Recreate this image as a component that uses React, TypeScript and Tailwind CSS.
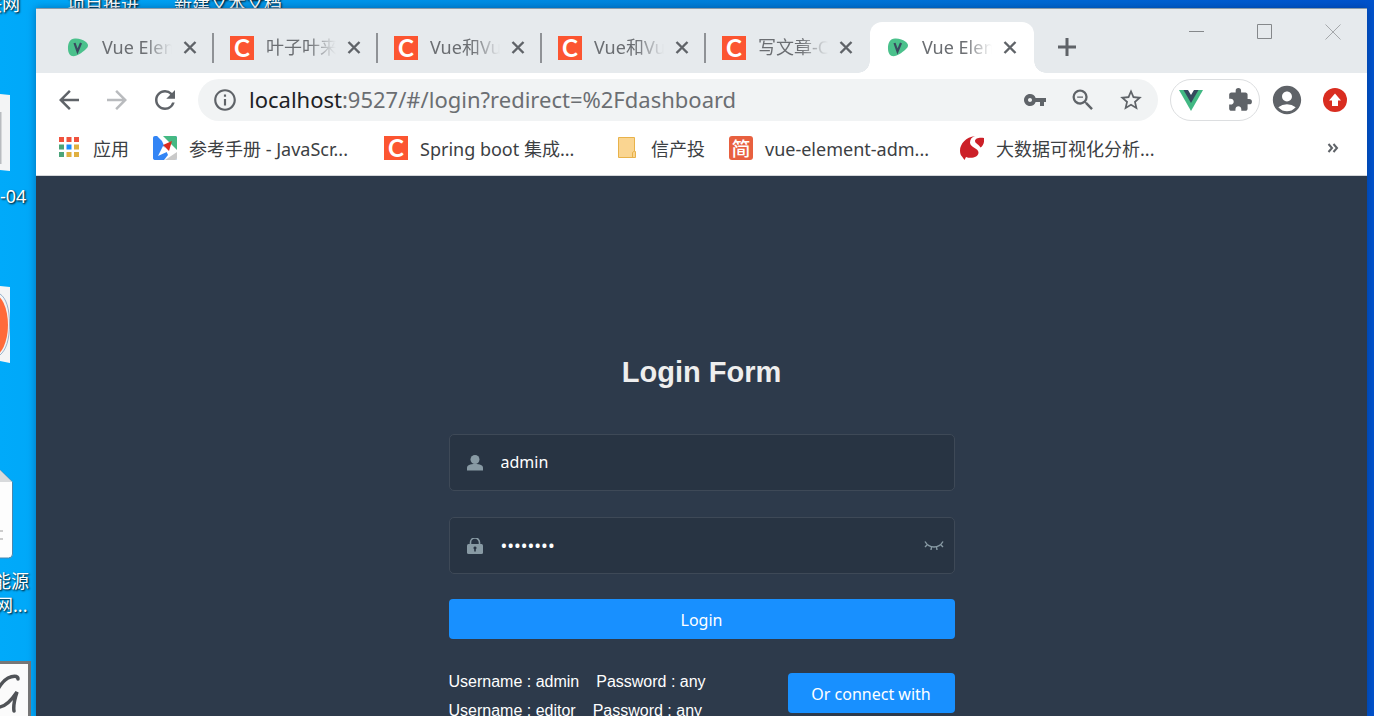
import { useState } from 'react';
import type { ReactNode } from 'react';
import {
  MdAccountCircle,
  MdArrowBack,
  MdArrowForward,
  MdExtension,
  MdInfoOutline,
  MdRefresh,
  MdStarBorder,
  MdVpnKey,
  MdZoomOut,
} from 'react-icons/md';

function VueAdminIcon() {
  return (
    <svg viewBox="0 0 24 24" className="size-6 shrink-0" aria-hidden="true">
      <path
        d="M2 13C1.800 7 4 2.500 9 2.500c4-.2 8 1 11 3.500c3 2.500 2.600 5-.5 7.500-3.500 3-8 6.500-12 6.700-3.500 0-5.300-3-5.500-7.200z"
        fill="#4bc18c"
      />
      <path d="M8.500 7l3 8.500L15 7" fill="none" stroke="#3a4a60" strokeWidth="2.200" />
    </svg>
  );
}

function CsdnIcon() {
  return (
    <span
      aria-hidden="true"
      className="flex size-6 shrink-0 items-center justify-center bg-[#fc5531] font-['Lato',sans-serif] text-[24px] leading-6 font-bold text-white"
    >
      C
    </span>
  );
}

function AppsIcon() {
  const colors = ['#f0523d', '#f0523d', '#f0523d', '#4ba47a', '#1a8cff', '#e0b040', '#4ba47a', '#e0b040', '#e0b040'];
  return (
    <svg viewBox="0 0 24 24" className="size-6 shrink-0" aria-hidden="true">
      {colors.map((c, i) => (
        <rect key={i} x={2 + (i % 3) * 7.5} y={1 + Math.floor(i / 3) * 7.5} width="5" height="5" fill={c} />
      ))}
    </svg>
  );
}

function CompassIcon() {
  return (
    <svg viewBox="0 0 24 24" className="size-6 shrink-0" aria-hidden="true">
      <rect width="24" height="24" rx="2" fill="#3385f5" />
      <path d="M8 0h14a2 2 0 0 1 2 2v15z" fill="#45b983" />
      <path d="M4 0h6l14 14v8a2 2 0 0 1-2 2H11z" fill="#fff" />
      <path d="M12 24l12-8v6a2 2 0 0 1-2 2z" fill="#c9c9c9" />
      <path d="M4 0L0 2v20l2 2h9l4-5L9 5z" fill="#3385f5" />
      <path d="M5 20L10 10l6 5z" fill="#fff" />
      <path d="M19 5l-9 4 6 6z" fill="#dc2c20" />
    </svg>
  );
}

function FolderIcon() {
  return (
    <svg viewBox="0 0 24 24" className="size-6 shrink-0" aria-hidden="true">
      <path d="M3.500 1.500h16v14h1v6h-17z" fill="#fad591" stroke="#e8b24a" />
      <path d="M17.500 21.500v-5l2-1.500" fill="none" stroke="#e8b24a" />
    </svg>
  );
}

function JianIcon() {
  return (
    <span
      aria-hidden="true"
      className="flex size-6 shrink-0 items-center justify-center rounded-[3px] bg-[#e8603f] font-['Noto_Sans_CJK_SC',sans-serif] text-[19px] leading-6 font-medium text-white"
    >
      简
    </span>
  );
}

function SmartIcon() {
  return (
    <svg viewBox="0 0 24 24" className="size-6 shrink-0" aria-hidden="true">
      <path
        d="M15 0C6 1 0 8 0 14.500c0 3 .8 5 2 6L4.500 24l1.500-3c5 2 12.500.5 12.500-4.500 0-4.500-8.500-5-8.500-10C10 3 12 1 15 0z"
        fill="#cc2028"
      />
      <path d="M24 2c-4-1-9 0-9 3 0 2.500 4 3.500 5.500 6.500C23.500 9.500 24.500 6 24 2z" fill="#cc2028" />
    </svg>
  );
}

function VueIcon() {
  return (
    <svg viewBox="0 0 24 21" className="h-[21px] w-6" aria-hidden="true">
      <path d="M0 0h24L12 21z" fill="#41b883" />
      <path d="M4.500 0h15L12 13z" fill="#34495e" />
      <path d="M9 0h6l-3 5z" fill="#fff" />
    </svg>
  );
}

const TABS: { title: string; icon: ReactNode }[] = [
  { title: 'Vue Element', icon: <VueAdminIcon /> },
  { title: '叶子叶来', icon: <CsdnIcon /> },
  { title: 'Vue和Vue', icon: <CsdnIcon /> },
  { title: 'Vue和Vue', icon: <CsdnIcon /> },
  { title: '写文章-CSDN', icon: <CsdnIcon /> },
  { title: 'Vue Element', icon: <VueAdminIcon /> },
];

const ACTIVE_TAB = 5;

const BOOKMARKS: { label: string; icon: ReactNode; long: boolean }[] = [
  { label: '应用', icon: <AppsIcon />, long: false },
  { label: '参考手册 - JavaScr...', icon: <CompassIcon />, long: true },
  { label: 'Spring boot 集成...', icon: <CsdnIcon />, long: true },
  { label: '信产投', icon: <FolderIcon />, long: false },
  { label: 'vue-element-adm...', icon: <JianIcon />, long: true },
  { label: '大数据可视化分析...', icon: <SmartIcon />, long: true },
];

function TabStrip() {
  return (
    <div className="flex h-16 bg-[#e6eaed] pl-[14px]">
      <div className="flex min-w-0 items-end">
        {TABS.map((tab, i) => {
          const active = i === ACTIVE_TAB;
          return (
            <div
              key={i}
              className={
                active
                  ? 'relative flex h-[51px] w-[164px] items-center rounded-t-xl bg-white pr-[14px] pl-4'
                  : 'relative flex h-[51px] w-[164px] items-center pr-[14px] pl-4'
              }
            >
              {tab.icon}
              <span className="ml-3 flex-1 overflow-hidden mask-r-from-60% text-[18px] whitespace-nowrap text-[#6b6e72]">
                {tab.title}
              </span>
              <button type="button" aria-label="Close tab" className="ml-2 text-[#5f6368]">
                <svg width="20" height="20" viewBox="0 0 20 20" stroke="currentColor" strokeWidth="2.400">
                  <path d="M4.500 4l11 11M15.500 4l-11 11" />
                </svg>
              </button>
              {i < ACTIVE_TAB - 1 && <span className="absolute top-[11px] right-0 h-[30px] w-[2px] bg-[#8f9296]" />}
              {active && (
                <>
                  <span className="absolute bottom-0 -left-3 size-3 bg-radial-[circle_at_0_0] from-[#e6eaed] from-[11.5px] to-white to-[12px]" />
                  <span className="absolute -right-3 bottom-0 size-3 bg-radial-[circle_at_100%_0] from-[#e6eaed] from-[11.5px] to-white to-[12px]" />
                </>
              )}
            </div>
          );
        })}
      </div>
      <button type="button" aria-label="New tab" className="mt-3 ml-[19px] flex h-[51px] items-center text-[#5f6368]">
        <svg width="28" height="28" viewBox="0 0 28 28" stroke="currentColor" strokeWidth="3">
          <path d="M14 5v18M5 14h18" />
        </svg>
      </button>
      <div className="ml-auto flex h-[46px] items-center text-[#85888b]">
        <button type="button" aria-label="Minimize" className="flex w-[68px] justify-center">
          <svg width="16" height="16" viewBox="0 0 16 16" stroke="currentColor" fill="none">
            <path d="M0 7.500h15" />
          </svg>
        </button>
        <button type="button" aria-label="Maximize" className="flex w-[68px] justify-center">
          <svg width="16" height="16" viewBox="0 0 16 16" stroke="currentColor" fill="none">
            <path d="M.5.5h14v14H.5z" />
          </svg>
        </button>
        <button type="button" aria-label="Close window" className="flex w-[68px] justify-center text-[#a5a8ab]">
          <svg width="16" height="16" viewBox="0 0 16 16" stroke="currentColor" fill="none">
            <path d="M.5.5l15 15M15.500.5l-15 15" />
          </svg>
        </button>
      </div>
    </div>
  );
}

function Toolbar() {
  return (
    <div className="flex items-center pt-[6px] pr-2 pl-[9px] text-[#5f6368]">
      <button type="button" aria-label="Back" className="flex w-12 justify-center">
        <MdArrowBack size={30} />
      </button>
      <button type="button" aria-label="Forward" className="flex w-12 justify-center text-[#b9bbbe]">
        <MdArrowForward size={30} />
      </button>
      <button type="button" aria-label="Reload" className="flex w-12 justify-center">
        <MdRefresh size={30} />
      </button>
      <div className="ml-[9px] flex h-[42px] min-w-0 flex-1 items-center rounded-full bg-[#f1f3f4] pr-[3px] pl-[14px]">
        <MdInfoOutline size={26} className="shrink-0" />
        <p className="ml-[11px] flex-1 truncate pb-[2px] text-[22px] text-[#6b6e72]">
          <span className="text-[#202124]">localhost</span>:9527/#/login?redirect=%2Fdashboard
        </p>
        <button type="button" aria-label="Saved passwords" className="flex w-12 justify-center">
          <MdVpnKey size={24} />
        </button>
        <button type="button" aria-label="Zoom" className="flex w-12 justify-center">
          <MdZoomOut size={28} />
        </button>
        <button type="button" aria-label="Bookmark this page" className="flex w-12 justify-center">
          <MdStarBorder size={26} />
        </button>
      </div>
      <div className="ml-3 flex h-[42px] w-[90px] items-center justify-between rounded-full border border-[#dcdee0] pr-[6px] pl-2">
        <button type="button" aria-label="Vue devtools">
          <VueIcon />
        </button>
        <button type="button" aria-label="Extensions">
          <MdExtension size={26} />
        </button>
      </div>
      <button type="button" aria-label="Profile" className="ml-[3px] flex w-12 justify-center">
        <MdAccountCircle size={34} />
      </button>
      <button type="button" aria-label="Update" className="flex w-12 justify-center">
        <svg viewBox="0 0 24 24" className="size-6" aria-hidden="true">
          <circle cx="12" cy="12" r="12" fill="#d92d20" />
          <path d="M12 5.500l6 7h-3V18H9v-5.500H6z" fill="#fff" />
        </svg>
      </button>
    </div>
  );
}

function BookmarksBar() {
  return (
    <nav className="flex h-[55px] items-center gap-6 border-b border-[#d5d7da] pr-7 pl-[21px] text-[18px] text-[#3c4043]">
      {BOOKMARKS.map((b) => (
        <a key={b.label} href="#" className="flex items-center gap-3 whitespace-nowrap">
          {b.icon}
          <span className={b.long ? 'w-[171px] pt-[2px]' : 'pt-[2px]'}>{b.label}</span>
        </a>
      ))}
      <button type="button" aria-label="More bookmarks" className="ml-auto text-[#5f6368]">
        <svg width="12" height="12" viewBox="0 0 12 12" fill="none" stroke="currentColor" strokeWidth="2">
          <path d="M1.500 2l3.500 4-3.500 4M6.500 2L10 6l-3.500 4" />
        </svg>
      </button>
    </nav>
  );
}

function LoginPage() {
  const [username, setUsername] = useState('admin');
  const [password, setPassword] = useState('11111111');

  return (
    <main className="min-h-0 flex-1 overflow-hidden bg-[#2d3a4b] pt-44">
      <form onSubmit={(e) => e.preventDefault()} className="mx-auto w-[506px] max-w-full text-white">
        <h1 className="mb-[42px] text-center font-['Liberation_Sans',sans-serif] text-[29px] leading-10 font-bold text-[#eeeeee]">
          Login Form
        </h1>
        <div className="mb-[26px] flex h-[57px] items-center rounded-[5px] border border-[#3e4957] bg-[#283443] pl-[17px]">
          <svg width="16" height="16" viewBox="0 0 16 16" fill="#889aa4" aria-hidden="true">
            <circle cx="8" cy="4.500" r="4.500" />
            <path d="M0 15.500V13c0-3 3-4 8-4s8 1 8 4v2.500z" />
          </svg>
          <input
            type="text"
            aria-label="Username"
            value={username}
            onChange={(e) => setUsername(e.target.value)}
            className="ml-[18px] min-w-0 flex-1 bg-transparent pb-[2px] text-[16px] outline-none"
          />
        </div>
        <div className="mb-[25px] flex h-[57px] items-center rounded-[5px] border border-[#3e4957] bg-[#283443] pr-[10px] pl-[17px]">
          <svg width="16" height="16" viewBox="0 0 16 16" fill="#889aa4" aria-hidden="true">
            <path d="M3.500 7V4.500a4.500 4.500 0 0 1 9 0V7" fill="none" stroke="#889aa4" strokeWidth="1.600" />
            <rect y="6" width="16" height="10" rx="1.500" />
            <path d="M8 8.500a1.500 1.500 0 0 0-.8 2.800V13.500h1.600v-2.200A1.500 1.500 0 0 0 8 8.500z" fill="#283443" />
          </svg>
          <input
            type="password"
            aria-label="Password"
            value={password}
            onChange={(e) => setPassword(e.target.value)}
            className="ml-[18px] min-w-0 flex-1 bg-transparent text-[18px] outline-none"
          />
          <button type="button" aria-label="Show password">
            <svg width="20" height="12" viewBox="0 0 20 12" fill="none" stroke="#889aa4" strokeWidth="1.400">
              <path d="M1 1.500C3 5 6 7 10 7s7-2 9-5.500M3.500 4.500L1 7M16.500 4.500L19 7M7.500 7L7 10M12.500 7l.5 3" />
            </svg>
          </button>
        </div>
        <button type="submit" className="block h-10 w-full rounded bg-[#1890ff] pt-[2px] text-[16px]">
          Login
        </button>
        <div className="mt-7 flex items-start justify-between">
          <div className="font-['Liberation_Sans',sans-serif] text-[16px] leading-[29px]">
            <p className="flex gap-[17px]">
              <span>Username : admin</span>
              <span>Password : any</span>
            </p>
            <p className="flex gap-[17px]">
              <span>Username : editor</span>
              <span>Password : any</span>
            </p>
          </div>
          <button type="button" className="mt-[6px] h-10 w-[167px] rounded bg-[#1890ff] pt-[2px] text-[16px]">
            Or connect with
          </button>
        </div>
      </form>
    </main>
  );
}

// Icons and labels lie freely on the desktop, behind the browser window.
function DesktopIcons() {
  return (
    <div className="absolute inset-0 overflow-hidden text-[18px] leading-6 whitespace-nowrap text-white text-shadow-[1px_1px_2px_#000]">
      <span className="absolute -top-2 -left-4">联网</span>
      <span className="absolute -top-2 left-[67px]">项目推进</span>
      <span className="absolute -top-2 left-[174px]">新建文本文档</span>

      <svg className="absolute top-[94px] left-0" width="16" height="80" viewBox="0 0 16 80" aria-hidden="true">
        <path d="M0 0l10 1v76L0 76z" fill="#f3f4f5" />
        <path d="M0 18h1.500v52H0z" fill="#b9bcc0" />
      </svg>
      <span className="absolute top-[184px] left-0">-04</span>

      <svg className="absolute top-[286px] left-0" width="16" height="80" viewBox="0 0 16 80" aria-hidden="true">
        <path d="M0 0l10 1v76L0 75z" fill="#f3f4f5" />
        <ellipse cx="-7" cy="39" rx="15" ry="31" fill="#ff6a3a" />
        <path d="M0 8c6 4 9.500 14 9.500 30S6 64 0 69" fill="none" stroke="#5a86b0" strokeWidth=".6" />
      </svg>

      <svg className="absolute top-[466px] left-0" width="16" height="94" viewBox="0 0 16 94" aria-hidden="true">
        <path d="M-2 2l14.500 14v72a4 4 0 0 1-4 4H-2z" fill="#fdfdfd" stroke="#4a86ad" />
        <path d="M0 4l12 12H0z" fill="#d8dadc" />
        <path d="M0 65h3M0 73h3" stroke="#ccc" strokeWidth="2" />
      </svg>
      <span className="absolute top-[569px] -left-[7px]">能源</span>
      <span className="absolute top-[593px] -left-[5px]">网...</span>

      <svg className="absolute top-[661px] left-0" width="32" height="56" viewBox="0 0 32 56" aria-hidden="true">
        <path d="M-4 1.500h33.500V60H-4z" fill="#fbfbfb" stroke="#777" strokeWidth="3" />
        <path
          d="M18 18c0-4-6-3-10-1C4 19 1 23-2 28M-3 46c7 1 14-6 20-15-2 6-4 13-3 19"
          fill="none"
          stroke="#505357"
          strokeWidth="3.500"
          strokeLinecap="round"
        />
      </svg>
    </div>
  );
}

export default function App() {
  return (
    <div className="relative flex h-screen overflow-hidden bg-linear-to-r from-[#00aafa] via-[#0082dc] to-[#0052cc] pt-2 pr-[7px] pl-9 font-['Noto_Sans','Noto_Sans_CJK_SC',sans-serif]">
      <DesktopIcons />
      <div className="relative flex min-w-0 flex-1 flex-col border-t border-[#8a9aa8] bg-white shadow-[0_0_8px_rgba(0,30,80,0.4)]">
        <TabStrip />
        <Toolbar />
        <BookmarksBar />
        <LoginPage />
      </div>
    </div>
  );
}
